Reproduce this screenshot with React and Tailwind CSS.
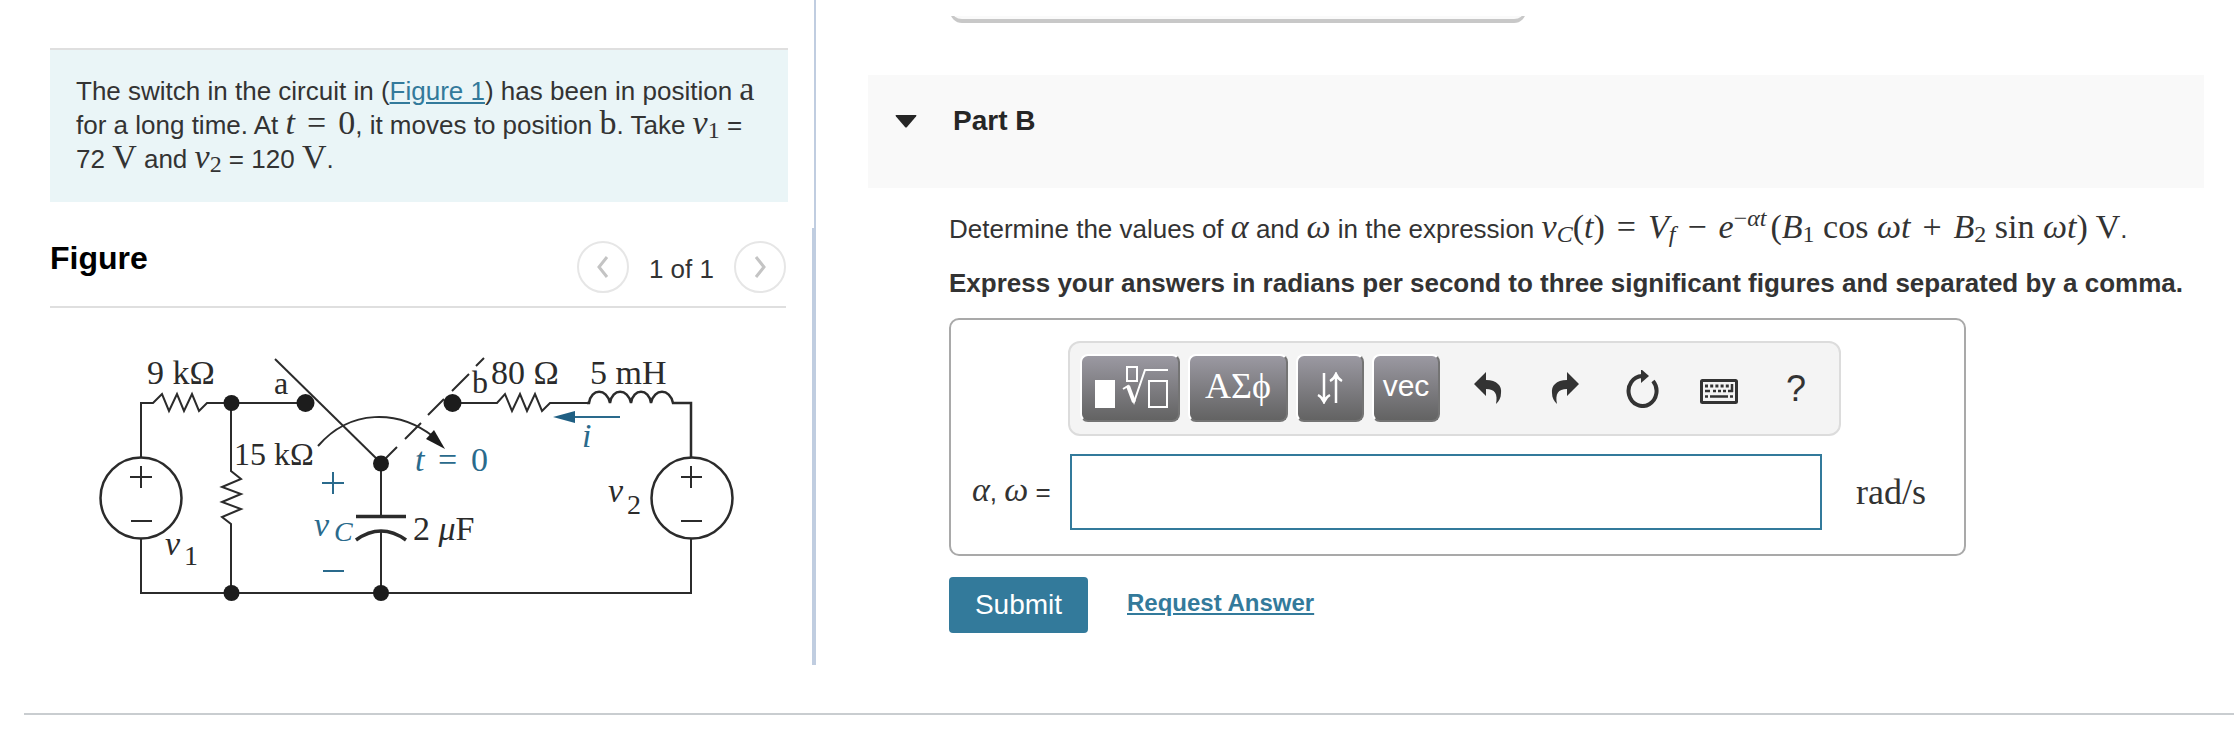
import { useState } from "react";

function Var({ children }) {
  return <i className="font-['Liberation_Serif',serif] text-[34px] leading-0">{children}</i>;
}

function Rm({ children }) {
  return <span className="font-['Liberation_Serif',serif] text-[34px] leading-0">{children}</span>;
}

function Op({ children }) {
  return <span className="mx-3 font-['Liberation_Serif',serif] text-[34px] leading-0">{children}</span>;
}

function Sub({ children }) {
  return (
    <span className="relative top-1 font-['Liberation_Serif',serif] text-[24px] leading-0">{children}</span>
  );
}

function Circuit() {
  return (
    <svg
      viewBox="80 340 660 270"
      width="660"
      height="270"
      className="max-w-full font-['Liberation_Serif',serif]"
      role="img"
      aria-label="Switched RLC circuit"
    >
      <g fill="none" stroke="#2b2b2b" strokeWidth="2">
        {/* left loop */}
        <path d="M141 456V402H153L162 393L169 410L177 393L184 410L192 393L199 410L207 402H305" />
        <path d="M231 402V470L241 478L222 486L241 493L222 501L241 508L222 516L231 523V592" />
        <path d="M141 538V592H691V538" />
        {/* right branch */}
        <path d="M452 402H497L505 393L512 410L520 393L527 410L535 393L542 410L550 402H589" />
        <path
          d="M587 402H589C591 387 607 387 610 402C612 387 628 387 631 402C633 387 649 387 651 402C654 387 670 387 673 402H691V456"
          strokeWidth="2.5"
        />
        {/* switch */}
        <path d="M275 358L381 462" />
        <path d="M386 457L397 446M405 438L421 422M428 414L444 398M452 390L469 373M476 365L484 357" />
        <path d="M318 445C350 408 398 408 434 436" />
        {/* capacitor */}
        <path d="M381 462V515M381 529V592" />
        <path d="M356 515.5H406M356 539Q381 521 406 539" strokeWidth="3.5" />
        {/* sources */}
        <circle cx="141" cy="497" r="40.5" strokeWidth="2.5" />
        <circle cx="692" cy="497" r="40.5" strokeWidth="2.5" />
        <path d="M130 476H152M141 465V487M131 520H152M681 476H702M691 465V487M681 520H702" />
      </g>
      <g fill="#1c1c1c">
        <circle cx="231.500" cy="402" r="8" />
        <circle cx="305.500" cy="402" r="9" />
        <circle cx="452.500" cy="402" r="9" />
        <circle cx="381" cy="462.500" r="8" />
        <circle cx="231.500" cy="592" r="8" />
        <circle cx="381" cy="592" r="8" />
        <path d="M445 448L426 438L434 429Z" />
      </g>
      <g stroke="#2a6a8c" strokeWidth="2">
        <path d="M322 482H344M333 471V493M323 570H344M573 416H620" />
        <path d="M553 416L575 410V422Z" fill="#1f5f83" stroke="none" />
      </g>
      <g fill="#2b2b2b" fontSize="34">
        <text x="147" y="383">9 kΩ</text>
        <text x="274" y="393" fontSize="32">a</text>
        <text x="234" y="464" fontSize="32">15 kΩ</text>
        <text x="472" y="392" fontSize="32">b</text>
        <text x="491" y="383">80 Ω</text>
        <text x="590" y="383">5 mH</text>
        <text x="413" y="539">2 <tspan fontStyle="italic">μ</tspan>F</text>
        <text x="165" y="554" fontStyle="italic">v</text>
        <text x="184" y="564" fontSize="28">1</text>
        <text x="608" y="501" fontStyle="italic">v</text>
        <text x="627" y="513" fontSize="28">2</text>
      </g>
      <g fill="#2a6a8c" fontSize="34">
        <text y="470">
          <tspan x="415" fontStyle="italic">t</tspan>
          <tspan x="438">=</tspan>
          <tspan x="471">0</tspan>
        </text>
        <text x="582" y="446" fontStyle="italic">i</text>
        <text x="314" y="535" fontStyle="italic">v</text>
        <text x="334" y="540" fontStyle="italic" fontSize="28">C</text>
      </g>
    </svg>
  );
}

function RoundButton({ label, d }) {
  return (
    <button
      aria-label={label}
      className="flex size-[52px] items-center justify-center rounded-full border-2 border-[#e6e6e6] bg-white"
    >
      <svg width="14" height="22" viewBox="0 0 14 22" fill="none" stroke="#c4c4c4" strokeWidth="3">
        <path d={d} />
      </svg>
    </button>
  );
}

const keyClass =
  "flex h-[68px] items-center justify-center rounded-lg border-2 border-t-white border-l-white border-r-[#747474] border-b-[#747474] bg-linear-to-b from-[#9b99a2] to-[#636363] text-white";
const toolClass = "flex h-10 w-10 items-center justify-center text-[#333]";

export default function App() {
  const [answer, setAnswer] = useState("");

  return (
    <div className="bg-white font-['Liberation_Sans',Arial,sans-serif] text-[26px] leading-[34px] text-[#333]">
      <main className="flex">
        <div className="w-[816px] shrink-0">
          <section className="h-[228px] border-r-2 border-[#c0cde0] pt-12 pr-[26px] pl-[50px]">
            <p className="border-t-2 border-[#dfdfdf] bg-[#eaf5f7] pt-6 pr-5 pb-[26px] pl-[26px]">
              The switch in the circuit in (
              <a href="#figure" className="text-[#337a9b] underline underline-offset-2">Figure 1</a>
              ) has been in position <Rm>a</Rm> for a long time. At <Var>t</Var>
              <Op>=</Op>
              <Rm>0</Rm>, it moves to position <Rm>b</Rm>. Take <Var>v</Var><Sub>1</Sub> ={" "}
              <span className="whitespace-nowrap">72 <Rm>V</Rm></span> and <Var>v</Var><Sub>2</Sub> = 120 <Rm>V</Rm>.
            </p>
          </section>
          <section id="figure" className="border-r-4 border-[#c0cde0] pr-[26px] pb-[54px] pl-[50px]">
            <div className="flex items-start justify-between border-b-2 border-[#dfdfdf] pt-[13px] pb-[13px]">
              <h2 className="text-[32px] leading-[34px] font-bold text-black">Figure</h2>
              <div className="flex items-center gap-5">
                <RoundButton label="Previous figure" d="M11 1L3 11L11 21" />
                <span className="pt-1">1 of 1</span>
                <RoundButton label="Next figure" d="M3 1L11 11L3 21" />
              </div>
            </div>
            <div className="pt-[33px] pl-[30px]">
              <Circuit />
            </div>
          </section>
        </div>

        <div className="min-w-0 flex-1 pt-4 pr-[30px] pl-[52px]">
          <div className="ml-[82px] h-2 w-[576px] overflow-hidden">
            <div className="-mt-8 h-[39px] rounded-xl border-x-2 border-b-4 border-[#c8c8c8] bg-[#fafafa]" />
          </div>
          <button className="mt-[51px] flex h-[113px] w-full items-start gap-9 bg-[#f9f9f9] pt-7 pl-[27px] text-left text-[28px] font-bold text-[#262626]">
            <svg width="22" height="13" viewBox="0 0 22 13" className="mt-3" fill="currentColor">
              <path d="M1 0H21Q22 0 21 1.500L12 12Q11 13 10 12L1 1.500Q0 0 1 0Z" />
            </svg>
            <span className="pt-px">Part B</span>
          </button>

          <div className="pl-[81px]">
            <p className="pt-6 whitespace-nowrap">
              Determine the values of <Var>α</Var> and <Var>ω</Var> in the expression <Var>v</Var>
              <Sub><i>C</i></Sub>
              <Rm>(<i>t</i>)</Rm>
              <Op>=</Op>
              <Var>V</Var>
              <Sub><i>f</i></Sub>
              <Op>−</Op>
              <Var>e</Var>
              <span className="relative -top-3 mr-1 font-['Liberation_Serif',serif] text-[24px] leading-0">−<i>αt</i></span>
              <Rm>(<i>B</i></Rm>
              <Sub>1</Sub>
              <Rm> cos <i>ωt</i></Rm>
              <Op>+</Op>
              <Var>B</Var>
              <Sub>2</Sub>
              <Rm> sin <i>ωt</i>) V</Rm>.
            </p>
            <p className="pt-5 font-bold whitespace-nowrap">
              Express your answers in radians per second to three significant figures and separated by a comma.
            </p>

            <div className="mt-[18px] w-[1017px] max-w-full rounded-[10px] border-2 border-[#a9a9a9] pt-[21px] pb-6">
              <div className="ml-[117px] flex h-[95px] w-[773px] items-center rounded-xl border-2 border-[#dcdcdc] bg-[#f4f4f4] pl-[10px]">
                <div className="flex gap-2 pb-0.5">
                  <button aria-label="Templates" className={`${keyClass} w-[100px]`}>
                    <svg width="76" height="46" viewBox="0 0 76 46" fill="none" stroke="#fff" strokeWidth="2">
                      <rect x="3" y="15" width="20" height="28" fill="#fff" stroke="none" />
                      <rect x="35" y="2" width="10" height="14" />
                      <path d="M31 24L36 21L42 37L53 5H76" />
                      <path d="M36 21L42 37" strokeWidth="4" />
                      <rect x="57" y="16" width="18" height="26" />
                    </svg>
                  </button>
                  <button className={`${keyClass} w-[100px] pb-1 font-['Liberation_Serif',serif] text-[36px]`}>ΑΣϕ</button>
                  <button aria-label="Subscript and superscript" className={`${keyClass} w-[68px]`}>
                    <svg width="28" height="32" viewBox="0 0 28 32" fill="none" stroke="#fff" strokeWidth="2.500">
                      <path d="M8 1V29M2 23Q6 25 8 30Q10 25 14 23M20 31V3M14 9Q18 7 20 2Q22 7 26 9" />
                    </svg>
                  </button>
                  <button className={`${keyClass} w-[68px] pb-1 text-[30px]`}>vec</button>
                </div>
                <div className="ml-7 flex items-center gap-[37px]">
                  <button aria-label="Undo" className={toolClass}>
                    <svg width="28" height="34" viewBox="0 0 28 34" fill="currentColor">
                      <path d="M0 12L12 0V8C23 8 28 14 27 21C27 26 25 29 22 32C24 22 21 17 12 17V24Z" />
                    </svg>
                  </button>
                  <button aria-label="Redo" className={toolClass}>
                    <svg width="28" height="34" viewBox="0 0 28 34" fill="currentColor">
                      <path d="M28 12L16 0V8C5 8 0 14 1 21C1 26 3 29 6 32C4 22 7 17 16 17V24Z" />
                    </svg>
                  </button>
                  <button aria-label="Reset" className={toolClass}>
                    <svg width="34" height="38" viewBox="0 0 34 38" fill="none" stroke="currentColor" strokeWidth="4">
                      <path d="M17 6A14 15 0 1 0 28 11" />
                      <path d="M16 -1L24 6L16 13Z" fill="currentColor" stroke="none" />
                    </svg>
                  </button>
                  <button aria-label="Keyboard" className={toolClass}>
                    <svg width="38" height="26" viewBox="0 0 38 26" className="mt-1" fill="none" stroke="currentColor">
                      <rect x="1.500" y="2.500" width="35" height="22" rx="1" strokeWidth="3" />
                      <path d="M5 8H30" strokeWidth="3" strokeDasharray="3 2.200" />
                      <path d="M5 13H10M13 13H16M18 13H21M23 13H26M28 13H33M32 6V14M5 18.500H8M10 18.500H28M30 18.500H33" strokeWidth="2.500" />
                    </svg>
                  </button>
                  <button aria-label="Help" className={`${toolClass} text-[36px]`}>?</button>
                </div>
              </div>
              <div className="mt-[18px] flex items-center pl-[21px]">
                <label htmlFor="answer" className="w-[98px] whitespace-nowrap">
                  <Var>α</Var>, <Var>ω</Var> =
                </label>
                <input
                  id="answer"
                  value={answer}
                  onChange={(e) => setAnswer(e.target.value)}
                  className="h-[76px] w-[752px] border-2 border-[#337a9b] bg-white px-4 outline-none"
                />
                <span className="pl-[34px] font-['Liberation_Serif',serif] text-[36px]">rad/s</span>
              </div>
            </div>

            <div className="mt-[21px] flex items-center gap-[39px]">
              <button className="h-14 w-[139px] rounded-[4px] bg-[#337a9b] text-[28px] text-white">Submit</button>
              <a href="#answer" className="pb-1 text-[24px] font-bold text-[#337a9b] underline underline-offset-2">
                Request Answer
              </a>
            </div>
          </div>
        </div>
      </main>
      <hr className="mt-12 ml-6 border-t-2 border-[#c9cdd0]" />
    </div>
  );
}
